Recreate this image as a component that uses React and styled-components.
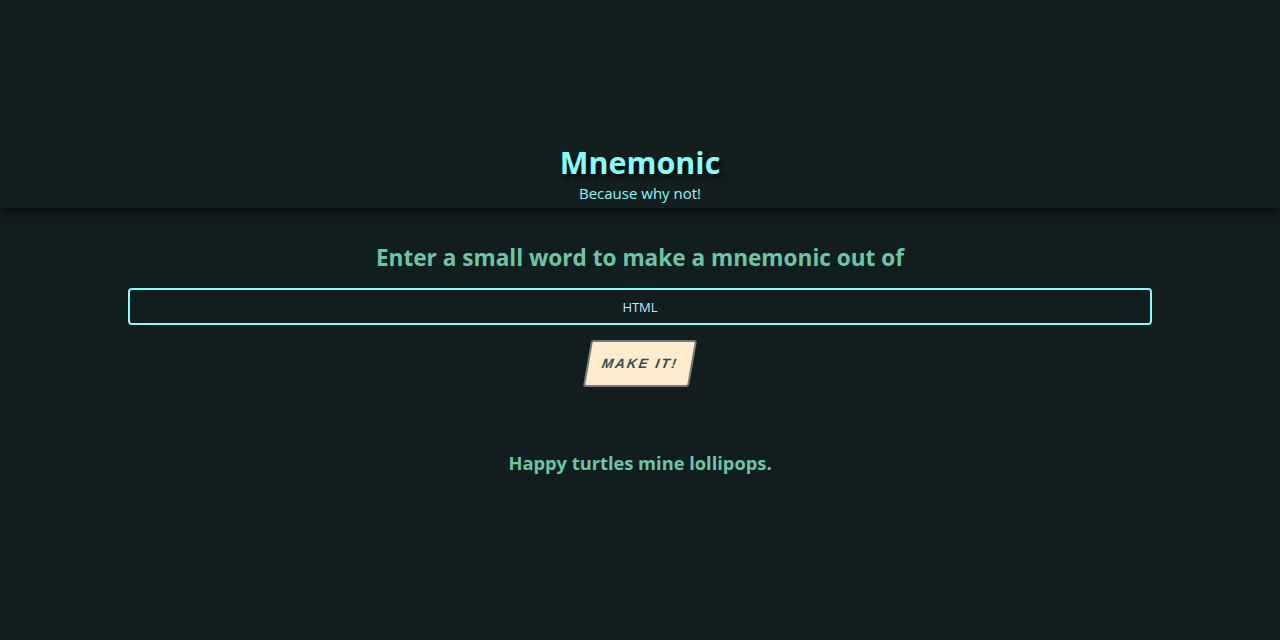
import React, { useState } from "react";
import styled, { createGlobalStyle } from "styled-components";

const Global = createGlobalStyle`
  html, body {
    margin: 0;
    padding: 0;
    background: #121d1f;
    font-family: "Open Sans", "Noto Sans", sans-serif;
  }
  * { box-sizing: border-box; }
`;

const Page = styled.div`
  min-height: 640px;
  background: #121d1f;
  display: flex;
  flex-direction: column;
`;

const Header = styled.header`
  height: 208px;
  background: #131e1f;
  box-shadow: 0 4px 8px rgba(0, 0, 0, 0.55);
  display: flex;
  flex-direction: column;
  align-items: center;
  justify-content: flex-end;
  padding-bottom: 5px;
  position: relative;
  z-index: 1;
`;

const Title = styled.h1`
  margin: 0;
  font-size: 30.5px;
  font-weight: 700;
  line-height: 1.1;
  color: #88fbfb;
  text-shadow: 3px 3px 4px rgba(0, 0, 0, 0.8);
`;

const Subtitle = styled.p`
  margin: 3px 0 0;
  font-size: 15px;
  line-height: 20px;
  color: #88fbfb;
`;

const Main = styled.main`
  display: flex;
  flex-direction: column;
  align-items: center;
  padding-top: 34px;
`;

const Prompt = styled.h2`
  margin: 0 0 14px;
  font-size: 22.6px;
  font-weight: 700;
  line-height: 32px;
  color: #6cc6a6;
`;

const WordInput = styled.input`
  width: 1024px;
  height: 37px;
  border: 2px solid #88fbfb;
  border-radius: 4px;
  background: #121d1f;
  color: #c8e6ff;
  font-family: "Open Sans", sans-serif;
  font-size: 13px;
  text-align: center;
  outline: none;
`;

const MakeButton = styled.button`
  margin-top: 15px;
  width: 106px;
  height: 47px;
  transform: skewX(-10deg);
  background: #ffebcd;
  border: 2px solid #777;
  border-radius: 3px;
  color: #2f4f4f;
  font-family: "Liberation Sans", Arial, sans-serif;
  font-size: 13.5px;
  font-weight: 700;
  font-style: italic;
  letter-spacing: 2px;
  text-transform: uppercase;
  cursor: pointer;
`;

const Result = styled.p`
  margin: 63px 0 0;
  font-size: 18.3px;
  font-weight: 700;
  line-height: 26px;
  color: #6cc6a6;
`;

export default function App() {
  const [word, setWord] = useState("HTML");
  return (
    <Page>
      <Global />
      <Header>
        <Title>Mnemonic</Title>
        <Subtitle>Because why not!</Subtitle>
      </Header>
      <Main>
        <Prompt>Enter a small word to make a mnemonic out of</Prompt>
        <WordInput value={word} onChange={(e) => setWord(e.target.value)} />
        <MakeButton>Make it!</MakeButton>
        <Result>Happy turtles mine lollipops.</Result>
      </Main>
    </Page>
  );
}
